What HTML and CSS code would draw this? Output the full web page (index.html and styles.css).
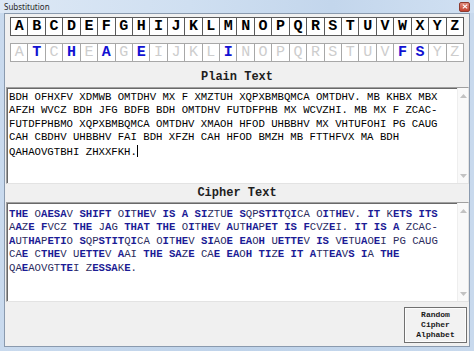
FILE: index.html
```html
<!DOCTYPE html>
<html lang="en">
  <head>
    <meta charset="UTF-8" />
    <meta name="viewport" content="width=device-width, initial-scale=1.0" />
    <title>Substitution</title>
    <link rel="stylesheet" href="styles.css">
  </head>
  <body>
    <div class="window">
      <div class="titlebar">
        <span class="title">Substitution</span>
        <span class="close">
          <svg width="6" height="5" viewBox="0 0 6 5">
            <path d="M0.8 0.6 L5.2 4.4 M5.2 0.6 L0.8 4.4" stroke="#fff" stroke-width="1.2" fill="none" />
          </svg>
        </span>
      </div>

      <div class="client">
        <div class="alphabet plain-row">
          <span>A</span><span>B</span><span>C</span><span>D</span><span>E</span><span>F</span><span>G</span><span>H</span><span>I</span><span>J</span><span>K</span><span>L</span><span>M</span><span>N</span><span>O</span><span>P</span><span>Q</span><span>R</span><span>S</span><span>T</span><span>U</span><span>V</span><span>W</span><span>X</span><span>Y</span><span>Z</span>
        </div>
        <div class="alphabet key-row">
          <span class="unset">A</span><span>T</span><span class="unset">C</span><span>H</span><span class="unset">E</span><span>A</span><span class="unset">G</span><span>E</span><span class="unset">I</span><span class="unset">J</span><span class="unset">K</span><span class="unset">L</span><span>I</span><span class="unset">N</span><span class="unset">O</span><span class="unset">P</span><span class="unset">Q</span><span class="unset">R</span><span class="unset">S</span><span class="unset">T</span><span class="unset">U</span><span class="unset">V</span><span>F</span><span>S</span><span class="unset">Y</span><span class="unset">Z</span>
        </div>

        <div class="label label-plain">Plain Text</div>
        <div class="textbox plain-box">
          <div class="text plain">BDH OFHXFV XDMWB OMTDHV MX F XMZTUH XQPXBMBQMCA OMTDHV. MB KHBX MBX
AFZH WVCZ BDH JFG BDFB BDH OMTDHV FUTDFPHB MX WCVZHI. MB MX F ZCAC-
FUTDFPHBMO XQPXBMBQMCA OMTDHV XMAOH HFOD UHBBHV MX VHTUFOHI PG CAUG
CAH CBDHV UHBBHV FAI BDH XFZH CAH HFOD BMZH MB FTTHFVX MA BDH
QAHAOVGTBHI ZHXXFKH.<span class="caret"></span></div>
          <div class="scrollbar">
            <svg width="7" height="4" viewBox="0 0 7 4"><path d="M0 4 L3.5 0 L7 4 Z" fill="#c2c2c2" /></svg>
            <svg width="7" height="4" viewBox="0 0 7 4"><path d="M0 0 L3.5 4 L7 0 Z" fill="#c2c2c2" /></svg>
          </div>
        </div>

        <div class="label label-cipher">Cipher Text</div>
        <div class="textbox cipher-box">
          <div class="text cipher"><b>THE</b> O<b>AESA</b>V <b>SHIFT</b> O<b>I</b>T<b>HE</b>V <b>IS</b> <b>A</b> <b>SI</b>ZTU<b>E</b> <b>S</b>QP<b>STIT</b>Q<b>I</b>CA O<b>I</b>T<b>HE</b>V. <b>IT</b> K<b>ETS</b> <b>ITS</b>
A<b>A</b>Z<b>E</b> <b>F</b>VCZ <b>THE</b> J<b>A</b>G <b>THAT</b> <b>THE</b> O<b>I</b>T<b>HE</b>V <b>A</b>UT<b>HA</b>P<b>ET</b> <b>IS</b> <b>F</b>CVZ<b>E</b>I. <b>IT</b> <b>IS</b> <b>A</b> ZCAC-
<b>A</b>UT<b>HA</b>P<b>ETI</b>O <b>S</b>QP<b>STIT</b>Q<b>I</b>CA O<b>I</b>T<b>HE</b>V <b>SI</b>AO<b>E</b> <b>EA</b>O<b>H</b> U<b>ETTE</b>V <b>IS</b> V<b>E</b>TU<b>A</b>O<b>E</b>I PG CAUG
CA<b>E</b> C<b>THE</b>V U<b>ETTE</b>V <b>A</b>AI <b>THE</b> <b>SA</b>Z<b>E</b> CA<b>E</b> <b>EA</b>O<b>H</b> <b>TI</b>Z<b>E</b> <b>IT</b> <b>A</b>TT<b>EA</b>V<b>S</b> <b>I</b>A <b>THE</b>
QA<b>E</b>AOVGT<b>TE</b>I Z<b>ESSA</b>K<b>E</b>.</div>
          <div class="scrollbar">
            <svg width="7" height="4" viewBox="0 0 7 4"><path d="M0 4 L3.5 0 L7 4 Z" fill="#c2c2c2" /></svg>
            <svg width="7" height="4" viewBox="0 0 7 4"><path d="M0 0 L3.5 4 L7 0 Z" fill="#c2c2c2" /></svg>
          </div>
        </div>

        <div class="footer">
          <button class="random">Random<br />Cipher<br />Alphabet</button>
        </div>
      </div>
    </div>
  </body>
</html>
```

FILE: styles.css
```css
body {
  margin: 0;
  background-color: #c4d6ec;
}

.window {
  width: 474px;
  height: 351px;
  display: flex;
  flex-direction: column;
  background: linear-gradient(to right, #c9daee, #bfd3ea 50%, #c8d9ed);
}

.titlebar {
  height: 13px;
  display: flex;
  align-items: center;
  padding: 0 4px 0 4px;
  background: linear-gradient(to right, #dde8f5, #cfdff1 40%, #c3d6ec 70%, #d0e0f2);
}
.title {
  font-family: "Noto Sans", sans-serif;
  font-size: 8px;
  color: #2a2a2a;
}
.close {
  margin-left: auto;
  width: 9px;
  height: 8px;
  border-radius: 2px;
  background: linear-gradient(#e08a7c, #c2402e);
  border: 1px solid #8e3a2f;
  display: flex;
  align-items: center;
  justify-content: center;
}
.close svg {
  display: block;
}

.client {
  flex: 1;
  margin: 0 4px 4px;
  border: 1px solid #8a9aae;
  background-color: #f0f0f0;
  display: flex;
  flex-direction: column;
}

/* letter rows */
.alphabet {
  display: flex;
  gap: 1px;
  margin: 0 5px;
  height: 19px;
  padding: 1px;
  box-sizing: border-box;
}
.alphabet span {
  flex: 1;
  background-color: #fff;
  font-family: "Liberation Mono", monospace;
  font-weight: bold;
  font-size: 15px;
  line-height: 17px;
  text-align: center;
}
.plain-row {
  margin-top: 3px;
  background-color: #5a5a5a;
}
.plain-row span {
  color: #000;
}
.key-row {
  margin-top: 7px;
  background-color: #a8a8a8;
}
.key-row span {
  color: #1212d2;
}
.key-row span.unset {
  color: #cdcdcd;
  font-weight: normal;
}

.label {
  font-family: "Liberation Mono", monospace;
  font-weight: bold;
  font-size: 12px;
  color: #1e1e1e;
  text-align: center;
  line-height: 14px;
}
.label-plain {
  margin: 8px 0 3px;
}
.label-cipher {
  margin: 2px 0 2px;
}

/* text areas */
.textbox {
  display: flex;
  margin-left: 1px;
  background-color: #fff;
  border-top: 1px solid #a0a0a0;
  border-left: 1px solid #a0a0a0;
  border-right: 1px solid #e3e3e3;
  border-bottom: 1px solid #e3e3e3;
  box-shadow: inset 1px 1px 0 #696969;
  box-sizing: border-box;
}
.plain-box {
  height: 97px;
}
.cipher-box {
  height: 100px;
}
.text {
  flex: 1;
  white-space: pre;
  font-family: "Liberation Mono", monospace;
  font-size: 10.67px;
  line-height: 13.4px;
  padding: 3px 0 0 2px;
  overflow: hidden;
}
.plain {
  color: #000;
}
.cipher {
  padding-top: 5px;
  color: #2c2c5e;
}
.cipher b {
  color: #1c1c96;
}
.caret {
  display: inline-block;
  width: 0;
  height: 12px;
  border-left: 1px solid #000;
  vertical-align: -2px;
}

.scrollbar {
  width: 10px;
  background-color: #f9f9f9;
  border-left: 1px solid #eeeeee;
  display: flex;
  flex-direction: column;
  justify-content: space-between;
  align-items: center;
  padding: 6px 0 5px;
}
.scrollbar svg {
  display: block;
}

.footer {
  flex: 1;
  display: flex;
  justify-content: flex-end;
  align-items: flex-start;
}
.random {
  width: 63px;
  height: 36px;
  margin: 5px 2px 0 0;
  padding: 0;
  border: 1px solid #707070;
  background-color: #f2f2f2;
  box-shadow: inset 0 0 0 1px #fcfcfc;
  font-family: "Liberation Mono", monospace;
  font-weight: bold;
  font-size: 8px;
  line-height: 10px;
  color: #1a1a1a;
}
```
